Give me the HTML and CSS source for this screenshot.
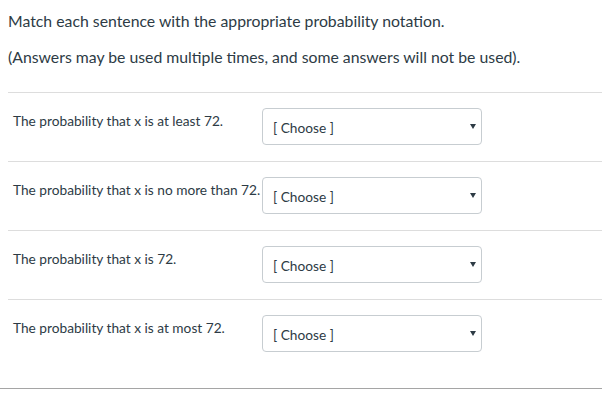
FILE: index.html
```html
<!DOCTYPE html>
<html lang="en">
<head>
<meta charset="utf-8">
<title>Matching question</title>
<link rel="stylesheet" href="styles.css">
</head>
<body>
<div class="question">
  <div class="text">
    <p class="intro">Match each sentence with the appropriate probability notation.</p>
    <p class="intro">(Answers may be used multiple times, and some answers will not be used).</p>
  </div>
  <div class="answers">
    <div class="row">
      <div class="label">The probability that x is at least 72.</div>
      <div class="select"><span class="choose">[ Choose ]</span><span class="arrow"></span></div>
    </div>
    <div class="row">
      <div class="label">The probability that x is no more than 72.</div>
      <div class="select"><span class="choose">[ Choose ]</span><span class="arrow"></span></div>
    </div>
    <div class="row">
      <div class="label">The probability that x is 72.</div>
      <div class="select"><span class="choose">[ Choose ]</span><span class="arrow"></span></div>
    </div>
    <div class="row">
      <div class="label">The probability that x is at most 72.</div>
      <div class="select"><span class="choose">[ Choose ]</span><span class="arrow"></span></div>
    </div>
  </div>
</div>
<div class="footer-line"></div>
</body>
</html>
```

FILE: styles.css
```css
html, body {
  margin: 0;
  padding: 0;
  background: #ffffff;
}
body {
  font-family: Lato, "Liberation Sans", sans-serif;
  color: #2d3b45;
  overflow: hidden;
}
.question {
  padding-left: 8px;
}
.text {
  padding-top: 11px;
  padding-bottom: 26px;
}
.intro {
  margin: 0 0 17px 0;
  font-size: 15.8px;
  line-height: 19px;
}
.intro:last-child {
  margin-bottom: 0;
}
.row {
  display: flex;
  align-items: flex-start;
  border-top: 1px solid #dddddd;
  padding: 15px 0 16px 5px;
}
.label {
  width: 249px;
  flex: none;
  font-size: 13.7px;
  line-height: 16px;
  padding-top: 5px;
  white-space: nowrap;
}
.select {
  flex: none;
  box-sizing: border-box;
  width: 220px;
  height: 37px;
  border: 1px solid #c7cdd1;
  border-radius: 4px;
  display: flex;
  align-items: center;
  justify-content: space-between;
  padding: 0 5px 0 10px;
  font-size: 13.7px;
}
.choose {
  padding-top: 1px;
}
.arrow {
  width: 0;
  height: 0;
  border-left: 3px solid transparent;
  border-right: 3px solid transparent;
  border-top: 5px solid #2d3b45;
}
.footer-line {
  margin-top: 20px;
  border-top: 1px solid #a5a5a5;
}
```
